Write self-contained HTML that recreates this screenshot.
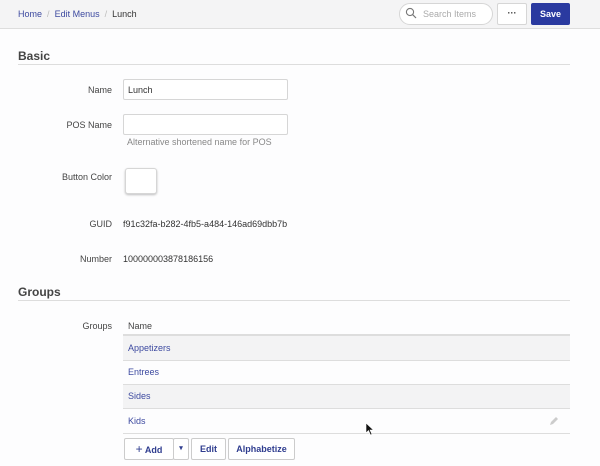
<!DOCTYPE html>
<html><head><style>
*{margin:0;padding:0;box-sizing:border-box}
body{width:600px;height:466px;overflow:hidden;background:#fdfdfe;font-family:"Liberation Sans",sans-serif;font-size:9px;color:#333;position:relative}
.a{position:absolute}
.hdr{left:0;top:0;width:600px;height:29px;background:#f4f4f5;border-bottom:1px solid #ddd}
.lnk{color:#3d4aa0}
.lbl{width:112px;left:0;text-align:right;color:#444}
.inp{border:1px solid #d6d6d6;border-radius:2px;background:#fff}
h2{position:absolute;font-size:12px;font-weight:bold;color:#444}
.hr{height:1px;background:#ddd;left:18px;width:552px}
.row{left:123px;width:447px;border-bottom:1px solid #ddd;padding-left:5px;color:#3d4aa0}
.btn{border:1px solid #ccc;border-radius:2px;background:#fff;font-weight:bold;color:#2f3d8f;text-align:center;line-height:20px;top:438px;height:22px}
</style></head><body>
<div class="a hdr"></div>
<div class="a" style="left:18px;top:9px"><span class="lnk">Home</span> <span style="color:#bbb">&nbsp;/&nbsp;</span> <span class="lnk">Edit Menus</span> <span style="color:#bbb">&nbsp;/&nbsp;</span> Lunch</div>
<div class="a" style="left:399px;top:3px;width:94px;height:22px;border:1px solid #d6d6d6;border-radius:11px;background:#fff"></div>
<svg class="a" style="left:405px;top:7px" width="12" height="12"><circle cx="5" cy="5" r="3.6" fill="none" stroke="#777" stroke-width="1.1"/><line x1="7.6" y1="7.6" x2="11" y2="11" stroke="#777" stroke-width="1.2"/></svg>
<div class="a" style="left:423px;top:9px;color:#aaa">Search Items</div>
<div class="a" style="left:497px;top:3px;width:30px;height:22px;border:1px solid #d6d6d6;background:#fff;border-radius:2px;text-align:center;font-weight:bold;line-height:18px">···</div>
<div class="a" style="left:531px;top:3px;width:39px;height:22px;background:#2a3aa0;border-radius:2px;color:#fff;font-weight:bold;text-align:center;line-height:22px">Save</div>
<h2 style="left:18px;top:49px">Basic</h2>
<div class="a hr" style="top:64px"></div>
<div class="a lbl" style="top:85px">Name</div>
<div class="a inp" style="left:123px;top:79px;width:165px;height:21px;padding:5px 4px">Lunch</div>
<div class="a lbl" style="top:120px">POS Name</div>
<div class="a inp" style="left:123px;top:114px;width:165px;height:21px"></div>
<div class="a" style="left:127px;top:137px;color:#888">Alternative shortened name for POS</div>
<div class="a lbl" style="top:172px">Button Color</div>
<div class="a inp" style="left:125px;top:168px;width:32px;height:26px;box-shadow:0 1px 2px rgba(0,0,0,.25);border-radius:3px"></div>
<div class="a lbl" style="top:219px">GUID</div>
<div class="a" style="left:123px;top:219px">f91c32fa-b282-4fb5-a484-146ad69dbb7b</div>
<div class="a lbl" style="top:254px">Number</div>
<div class="a" style="left:123px;top:254px">100000003878186156</div>
<h2 style="left:18px;top:285px">Groups</h2>
<div class="a hr" style="top:300px"></div>
<div class="a lbl" style="top:321px">Groups</div>
<div class="a" style="left:128px;top:321px;color:#444;font-weight:500">Name</div>
<div class="a" style="left:123px;top:334px;width:447px;height:2px;background:#ddd"></div>
<div class="a row" style="top:336px;height:25px;line-height:24px;background:#f3f3f4">Appetizers</div>
<div class="a row" style="top:361px;height:24px;line-height:23px">Entrees</div>
<div class="a row" style="top:385px;height:24px;line-height:23px;background:#f3f3f4">Sides</div>
<div class="a row" style="top:409px;height:25px;line-height:24px">Kids</div>
<svg class="a" style="left:549px;top:416px" width="10" height="10"><path d="M1 9 L2 6 L7 1 L9 3 L4 8 Z" fill="#ccc"/></svg>
<svg class="a" style="left:365px;top:422px" width="10" height="14"><path d="M1 1 L1 11 L3.5 8.5 L5.5 13 L7 12.3 L5 8 L8.5 8 Z" fill="#111" stroke="#fff" stroke-width=".6"/></svg>
<div class="a btn" style="left:124px;width:50px"><span style="font-size:12px;font-weight:normal">+</span> Add</div>
<div class="a btn" style="left:173px;width:16px;font-size:7px">▾</div>
<div class="a btn" style="left:191px;width:35px">Edit</div>
<div class="a btn" style="left:228px;width:67px">Alphabetize</div>
</body></html>
